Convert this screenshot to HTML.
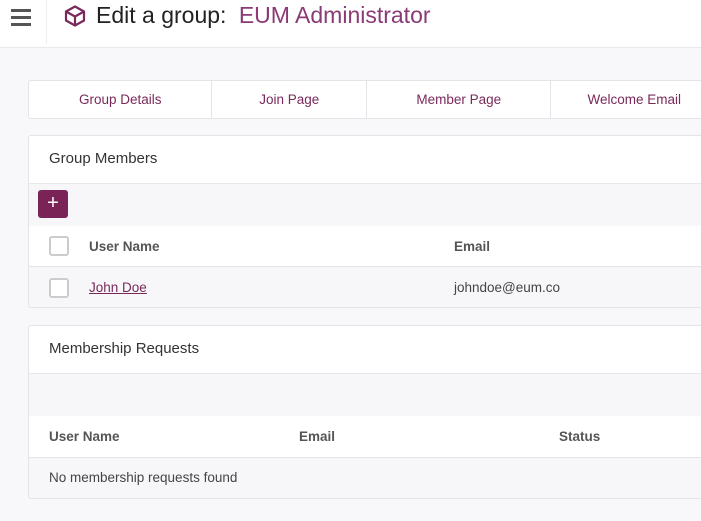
<!DOCTYPE html>
<html><head><style>
*{box-sizing:border-box;margin:0;padding:0}
body{width:701px;height:521px;overflow:hidden;background:#f8f8fb;font-family:"Liberation Sans",sans-serif;color:#444;position:relative}
.top{position:absolute;left:0;top:0;width:701px;height:48px;background:#fff;border-bottom:1px solid #e8e8ee}
.abs{position:absolute}
.card{position:absolute;left:28px;width:690px;background:#fff;border:1px solid #e3e3e8;border-radius:3px;overflow:hidden}
.t{font-size:13.5px;white-space:nowrap}
.h{font-weight:bold;color:#555}
.cb{position:absolute;width:20px;height:20px;border:2px solid #ccc;border-radius:3px;background:#fff}
</style></head><body>
<div class="top">
 <div class="abs" style="left:11px;top:9px;width:20px">
  <div style="height:3px;background:#555;margin-bottom:4px"></div><div style="height:3px;background:#555;margin-bottom:4px"></div><div style="height:3px;background:#555"></div>
 </div>
 <div class="abs" style="left:46px;top:0;width:1px;height:44px;background:#eee"></div>
 <svg class="abs" style="left:63px;top:4px" width="24" height="24" viewBox="0 0 24 24" fill="none" stroke="#7a2a5a" stroke-width="2.2" stroke-linejoin="round"><path d="M12 2.5 21 7.5V16.5L12 21.5 3 16.5V7.5Z M3 7.5 12 12.5 21 7.5 M12 12.5V21.5"/></svg>
 <div class="abs" style="left:96px;top:2px;font-size:23px;color:#222">Edit a group: <span style="color:#8b3a74;margin-left:6px">EUM Administrator</span></div>
</div>
<div class="card" style="top:80px;height:39px;display:flex">
 <div class="t" style="width:184px;border-right:1px solid #e3e3e8;text-align:center;line-height:38px;color:#7a2a5a">Group Details</div>
 <div class="t" style="width:155px;border-right:1px solid #e3e3e8;text-align:center;line-height:38px;color:#7a2a5a">Join Page</div>
 <div class="t" style="width:185px;border-right:1px solid #e3e3e8;text-align:center;line-height:38px;color:#7a2a5a">Member Page</div>
 <div class="t" style="width:166px;text-align:center;line-height:38px;color:#7a2a5a">Welcome Email</div>
</div>
<div class="card" style="top:135px;height:173px">
 <div class="abs t" style="left:20px;top:14px;font-size:15px;color:#333">Group Members</div>
 <div class="abs" style="left:0;top:47px;width:100%;height:43px;background:#f7f7f9;border-top:1px solid #e8e8ec"></div>
 <div class="abs" style="left:9px;top:54px;width:30px;height:28px;background:#7a2357;border-radius:3px;color:#fff;text-align:center;font-size:20px;line-height:27px">+</div>
 <div class="cb" style="left:20px;top:100px"></div>
 <div class="abs t h" style="left:60px;top:103px">User Name</div>
 <div class="abs t h" style="left:425px;top:103px">Email</div>
 <div class="abs" style="left:0;top:130px;width:100%;height:43px;background:#f7f7f9;border-top:1px solid #e3e3e8"></div>
 <div class="cb" style="left:20px;top:142px"></div>
 <div class="abs t" style="left:60px;top:144px;color:#7a2a5a;text-decoration:underline">John Doe</div>
 <div class="abs t" style="left:425px;top:144px;color:#444">johndoe@eum.co</div>
</div>
<div class="card" style="top:325px;height:174px">
 <div class="abs t" style="left:20px;top:14px;font-size:15px;color:#333">Membership Requests</div>
 <div class="abs" style="left:0;top:47px;width:100%;height:43px;background:#f7f7f9;border-top:1px solid #e8e8ec"></div>
 <div class="abs t h" style="left:20px;top:103px">User Name</div>
 <div class="abs t h" style="left:270px;top:103px">Email</div>
 <div class="abs t h" style="left:530px;top:103px">Status</div>
 <div class="abs" style="left:0;top:131px;width:100%;height:43px;background:#f7f7f9;border-top:1px solid #e3e3e8"></div>
 <div class="abs t" style="left:20px;top:144px">No membership requests found</div>
</div>
</body></html>
